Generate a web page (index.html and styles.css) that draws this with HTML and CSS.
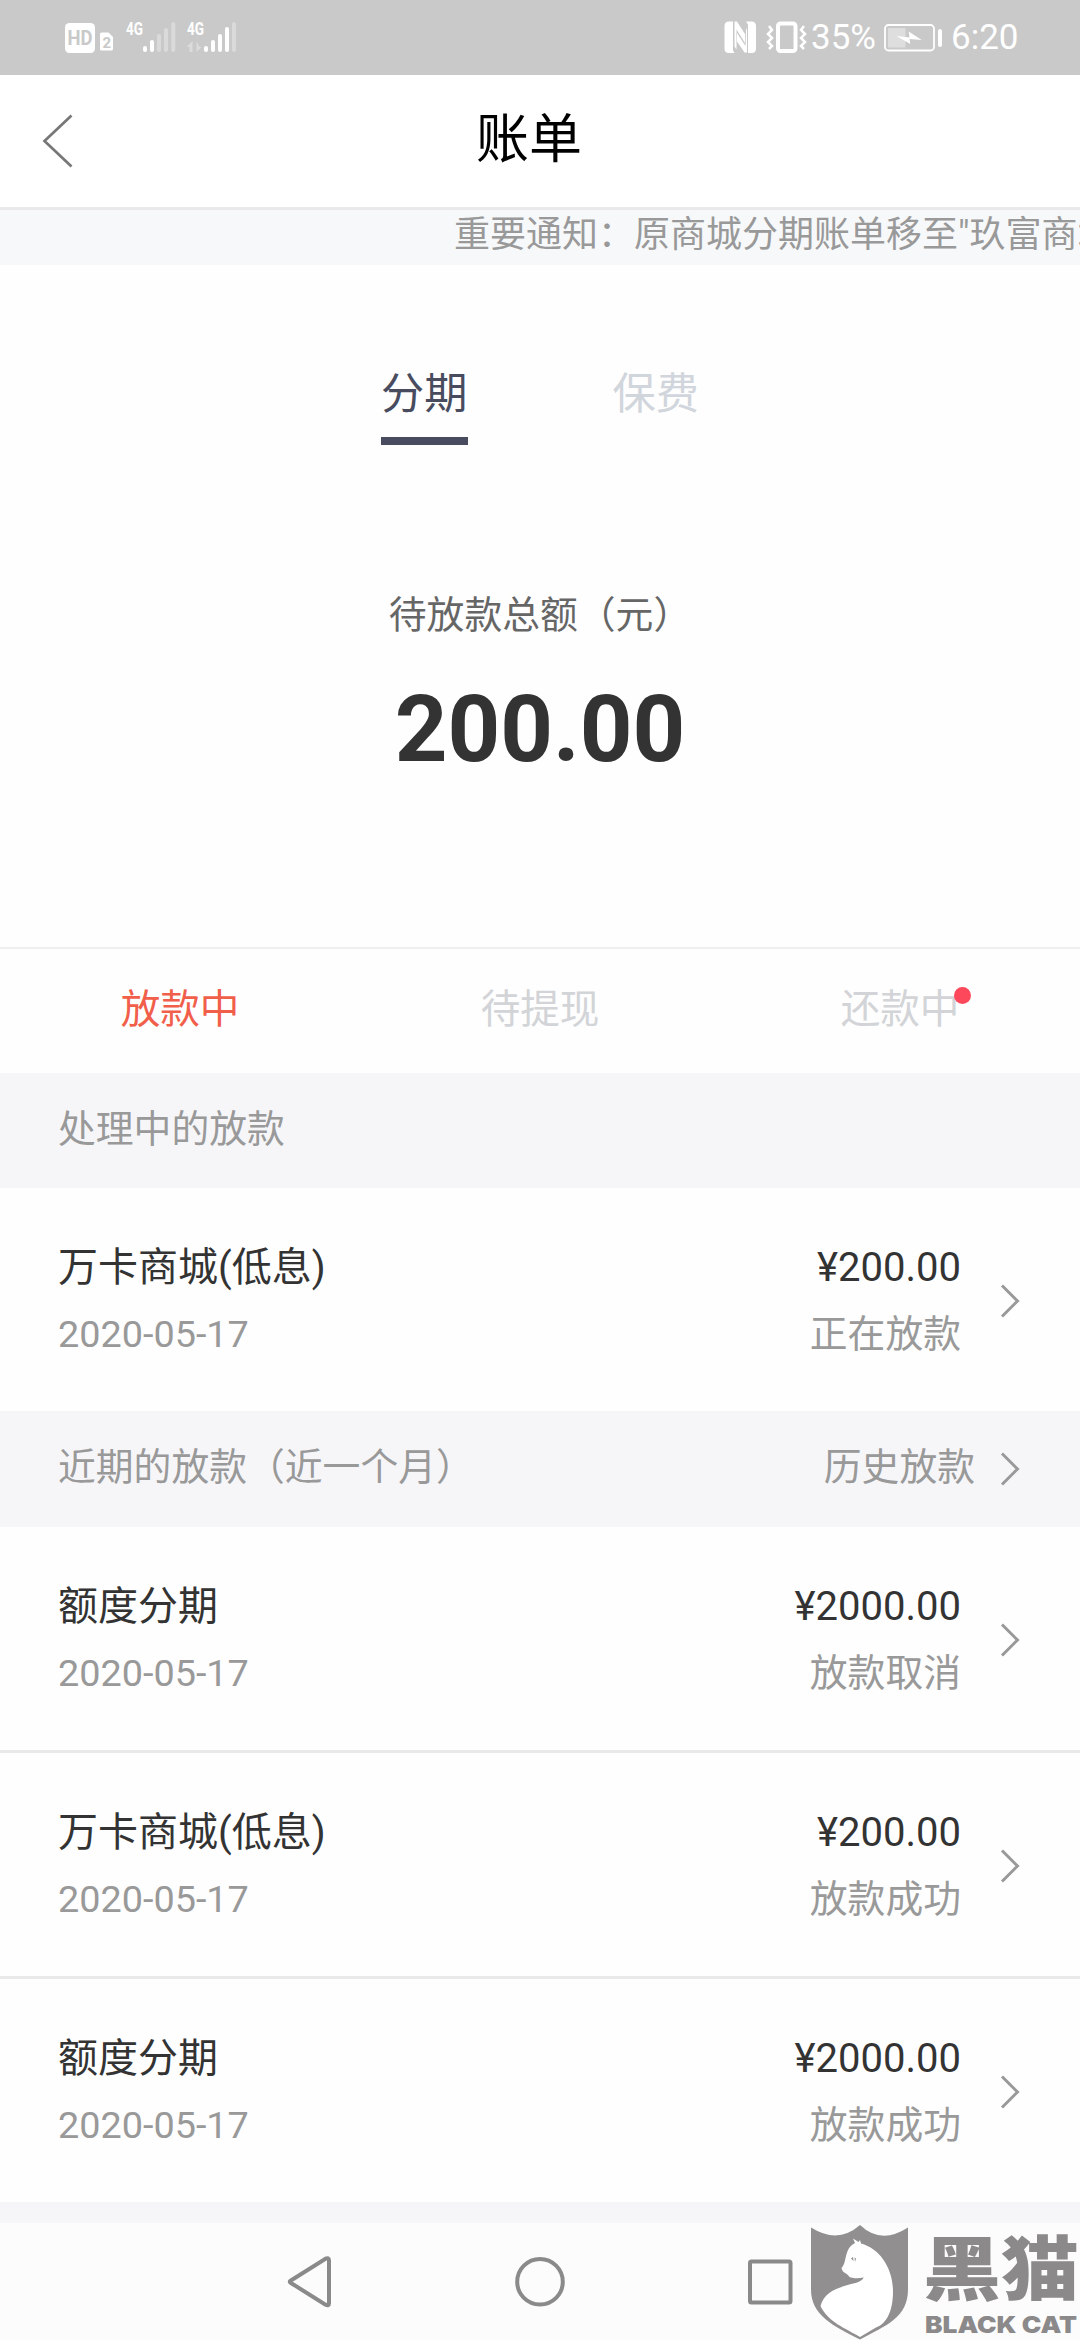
FILE: index.html
```html
<!DOCTYPE html>
<html lang="zh-CN">
<head>
<meta charset="utf-8">
<title>账单</title>
<link rel="stylesheet" href="styles.css">
</head>
<body>
<div class="screen">
  <div class="status">
    <svg class="status-left" width="200" height="75" viewBox="40 0 200 75">
      <rect x="65" y="23" width="30" height="30" rx="4.500" fill="#fff"/>
      <text x="67.500" y="45" class="hd" textLength="25" lengthAdjust="spacingAndGlyphs">HD</text>
      <path d="M101.500 32.500h7l4.500 4.500v12q0 1.500-1.500 1.500h-10q-1.500 0-1.500-1.500v-15q0-1.500 1.500-1.500z" fill="#fff"/>
      <text x="102.500" y="47.500" class="sim">2</text>
      <text x="126" y="35" class="net" textLength="17" lengthAdjust="spacingAndGlyphs">4G</text>
      <text x="187" y="35" class="net" textLength="17" lengthAdjust="spacingAndGlyphs">4G</text>
      <g stroke-width="4" stroke-linecap="round" stroke="#fff">
        <path d="M145 48v2M152 42v8"/>
        <path d="M159 36v14M166 30v20M173.300 24v26" opacity=".32"/>
        <path d="M206 48v2M213 42v8M220 36v14M227 29v21"/>
        <path d="M234 24v26" opacity=".32"/>
      </g>
      <path d="M192.500 41v11h-3v-5h-3zM196.500 41v11l5-5h-2z" fill="#fff" opacity=".35"/>
    </svg>
    <div class="status-right">
      <svg width="86" height="75" viewBox="720 0 86 75">
        <path d="M728 21.500h4v29l1.500 2.500h-5.500q-4.500 0-4.500-4.500v-22.500q0-4.500 4.500-4.500zM733.500 21.500h2.500l8 12.500v9l-8.500-13.500v20l-2-3zM745 21.500h5.500q4.500 0 4.500 4.500v22.500q0 4.500-4.500 4.500h-3.500v-28.500zM736 33l8.500 13 .5-18 1 2v22.500h-2.500l-7.500-11z" fill="#fff"/>
        <rect x="777" y="23.500" width="17.500" height="27.500" rx="2.500" fill="none" stroke="#fff" stroke-width="4"/>
        <path d="M768 26l3 4-4 4 4 4-4 4 4 4-3 3M803 26l-3 4 4 4-4 4 4 4-4 4 3 3" fill="none" stroke="#fff" stroke-width="2.500"/>
      </svg>
      <span class="percent">35%</span>
      <svg width="60" height="75" viewBox="882 0 60 75">
        <rect x="884" y="25" width="49" height="25.500" rx="3.500" fill="none" stroke="#fff" stroke-width="1.800"/>
        <path d="M887 28h17.500v19.500h-17.500z" fill="#fff" opacity=".4"/>
        <path d="M895.500 36l13 1.500-.8-6 13 8.500-12.200-1 .8 5z" fill="#fff"/>
        <path d="M939 31v14" stroke="#fff" stroke-width="4" stroke-linecap="round"/>
      </svg>
      <span class="clock">6:20</span>
    </div>
  </div>

  <header class="header">
    <svg class="back" width="34" height="60" viewBox="40 111 34 60"><path d="M71.500 115.500L44.500 141l27 25.500" fill="none" stroke="#777" stroke-width="2.700"/></svg>
    <h1>账单</h1>
  </header>
  <div class="notice">重要通知：原商城分期账单移至"玖富商城"</div>

  <section class="summary">
    <nav class="types"><span class="type on">分期</span><span class="type">保费</span></nav>
    <div class="label">待放款总额（元）</div>
    <div class="total">200.00</div>
  </section>

  <nav class="stages">
    <div class="stage on">放款中</div>
    <div class="stage">待提现</div>
    <div class="stage"><span class="marked">还款中<i class="dot"></i></span></div>
  </nav>

  <div class="group">处理中的放款</div>
  <div class="loan">
    <div class="what"><div class="name">万卡商城(低息)</div><div class="sub">2020-05-17</div></div>
    <div class="amount"><div class="name">¥200.00</div><div class="sub">正在放款</div></div>
    <svg class="go" width="20" height="34" viewBox="0 0 20 34"><path d="M2 1.500L17.500 17 2 32.500"/></svg>
  </div>
  <div class="group recent"><span>近期的放款（近一个月）</span><span class="history">历史放款</span>
    <svg class="go" width="20" height="34" viewBox="0 0 20 34"><path d="M2 1.500L17.500 17 2 32.500"/></svg>
  </div>
  <div class="loan lined">
    <div class="what"><div class="name">额度分期</div><div class="sub">2020-05-17</div></div>
    <div class="amount"><div class="name">¥2000.00</div><div class="sub">放款取消</div></div>
    <svg class="go" width="20" height="34" viewBox="0 0 20 34"><path d="M2 1.500L17.500 17 2 32.500"/></svg>
  </div>
  <div class="loan lined">
    <div class="what"><div class="name">万卡商城(低息)</div><div class="sub">2020-05-17</div></div>
    <div class="amount"><div class="name">¥200.00</div><div class="sub">放款成功</div></div>
    <svg class="go" width="20" height="34" viewBox="0 0 20 34"><path d="M2 1.500L17.500 17 2 32.500"/></svg>
  </div>
  <div class="loan">
    <div class="what"><div class="name">额度分期</div><div class="sub">2020-05-17</div></div>
    <div class="amount"><div class="name">¥2000.00</div><div class="sub">放款成功</div></div>
    <svg class="go" width="20" height="34" viewBox="0 0 20 34"><path d="M2 1.500L17.500 17 2 32.500"/></svg>
  </div>
  <div class="rest"></div>

  <footer class="keys">
    <svg width="52" height="54" viewBox="283 2254 52 54"><path d="M289.500 2279.700q-1.500 1 0 2l35 22q3.500 1.500 3.500-1.500v-43q0-3-3.500-1.500z"/></svg>
    <svg width="54" height="54" viewBox="513 2254 54 54"><circle cx="540" cy="2280.700" r="22.800"/></svg>
    <svg width="52" height="54" viewBox="743 2254 52 54"><rect x="749" y="2260.500" width="40.500" height="41" rx="1.500"/></svg>
  </footer>

  <svg class="watermark" width="270" height="118" viewBox="810 2222 270 118">
    <path d="M811 2227.500q27 17 49-2.500 21 20 48 2.500v62c0 28-22 36-48 50-27-14-49-24-49-50z" fill="#918f90"/>
    <path d="M853 2238.500l5.500 3.500 1.500-2 1 3.500c19 5 32 25 32 48 0 22-8 33-17 36l-16 9.500c-15-9-32-15-39.500-31 4-15 19-19 35-23 5-1.500 8-4 8-5.500-6 1.500-12 .5-14-.5-2-4-7-3.500-8-9 6-6 2-19 13.500-25z" fill="#fff"/>
    <path d="M851 2258.500l2-1.500.5 4zM854.500 2257.500l1.500 1-1 3.500z" fill="#918f90"/>
    <text x="923" y="2295" class="mark-cn" textLength="156" lengthAdjust="spacingAndGlyphs">黑猫</text>
    <text x="925" y="2332.500" class="mark-en" textLength="152" lengthAdjust="spacingAndGlyphs">BLACK CAT</text>
  </svg>
</div>
</body>
</html>
```
FILE: styles.css
```css
* { box-sizing: border-box; }
body {
  margin: 0;
  font-family: Roboto, "Noto Sans CJK SC", sans-serif;
  background: #fefefe;
  color: #333;
}
.screen {
  position: relative;
  width: 1080px;
  height: 2340px;
  overflow: hidden;
  display: flex;
  flex-direction: column;
}
.screen > * { flex-shrink: 0; }
svg { display: block; }

.status {
  height: 75px;
  padding: 0 39px 0 40px;
  background: #c9c9c9;
  display: flex;
  justify-content: space-between;
  color: #fff;
}
.status-right {
  width: 320px;
  display: flex;
  align-items: center;
  font-size: 35px;
  line-height: 77px;
}
.percent { width: 76px; padding-left: 4px; white-space: nowrap; }
.clock { padding-left: 8px; white-space: nowrap; }
.hd { font: 700 20px Roboto, sans-serif; fill: #c9c9c9; }
.sim { font: 700 15px Roboto, sans-serif; fill: #c9c9c9; }
.net { font: 700 19px Roboto, sans-serif; fill: #fff; }

.header {
  height: 135px;
  border-bottom: 3px solid #e9e9eb;
  background: #fff;
  display: grid;
  grid-template-columns: 40px 1fr 40px;
  align-items: center;
}
.back { grid-column: 2; grid-row: 1; }
.header h1 {
  grid-column: 1 / -1;
  grid-row: 1;
  margin: 0 0 3px;
  padding-right: 22px;
  text-align: center;
  font-size: 53px;
  font-weight: 400;
  line-height: 80px;
  color: #000;
}
.notice {
  height: 55px;
  padding-left: 454px;
  overflow: hidden;
  background: #f7f8fa;
  white-space: nowrap;
  font-size: 36px;
  line-height: 51px;
  color: #999;
}

.summary {
  height: 682px;
  display: flex;
  flex-direction: column;
  align-items: center;
}
.types { display: flex; gap: 145px; padding-top: 98px; }
.type {
  height: 82px;
  font-size: 43.2px;
  line-height: 64px;
  color: #d1d5dc;
}
.type.on { color: #484c5e; border-bottom: 8px solid #484c5e; }
.label { margin-top: 140px; font-size: 37.8px; line-height: 60px; color: #666; }
.total { margin-top: 30px; font-size: 92px; font-weight: 700; line-height: 110px; }

.stages {
  height: 126px;
  border-top: 2px solid #eee;
  display: grid;
  grid-template-columns: repeat(3, 1fr);
  text-align: center;
  font-size: 39.6px;
  line-height: 122px;
  color: #d2d4d7;
}
.stage.on { color: #f15f4b; }
.marked { position: relative; }
.dot {
  position: absolute;
  right: -12px;
  top: 1px;
  width: 17px;
  height: 17px;
  border-radius: 50%;
  background: #fd475a;
}

.group {
  height: 115px;
  padding: 0 60px 4px 58px;
  background: #f6f6f9;
  display: flex;
  align-items: center;
  font-size: 37.8px;
  line-height: 60px;
  color: #999;
}
.history { margin-left: auto; margin-right: 25px; }
.go { width: 20px; height: 34px; fill: none; stroke: #999; stroke-width: 3; }
.recent { height: 116px; }
.recent .go { margin-top: 4px; }
.loan {
  height: 223px;
  padding: 2px 60px 0 58px;
  display: flex;
  align-items: center;
  justify-content: space-between;
}
.lined { height: 226px; border-bottom: 3px solid #e9e9ea; }
.amount { margin-left: auto; margin-right: 39px; text-align: right; }
.name { font-size: 40px; line-height: 66px; }
.sub { font-size: 37.8px; line-height: 66px; color: #999; }
.rest { height: 21px; background: #f6f6f9; }

.keys {
  height: 118px;
  padding: 0 284px;
  background: #fcfcfc;
  display: flex;
  align-items: center;
  justify-content: space-between;
}
.keys svg { fill: none; stroke: #8a8a8a; stroke-width: 4; }

.watermark { position: absolute; right: 0; bottom: 0; }
.mark-cn { font: 900 70px "Noto Sans CJK SC", sans-serif; fill: #8b898a; }
.mark-en { font: 900 23px Inter, sans-serif; fill: #8b898a; }
```
